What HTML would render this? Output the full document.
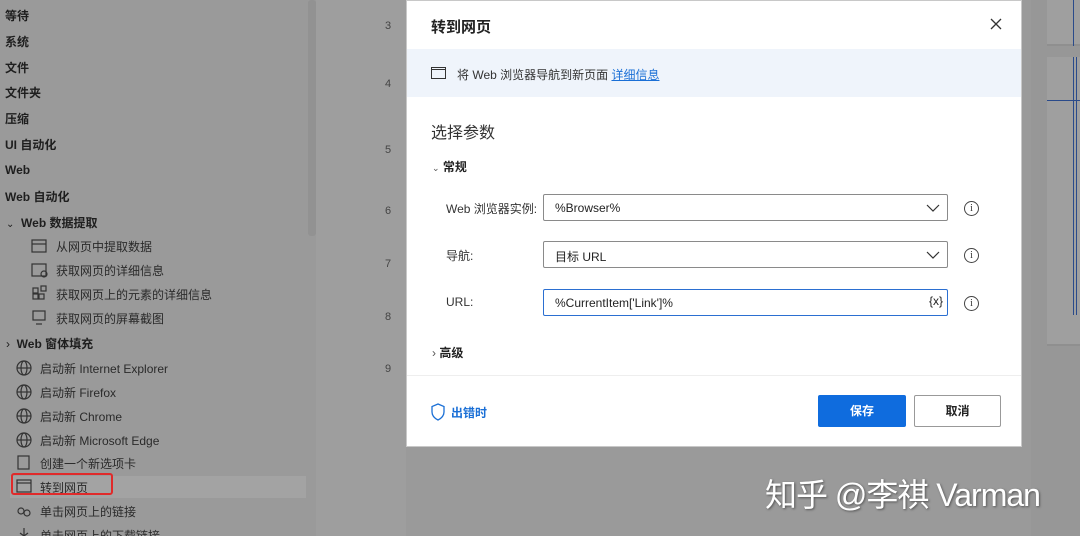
<!DOCTYPE html>
<html><head><meta charset="utf-8"><style>
*{margin:0;padding:0;box-sizing:border-box}
html,body{width:1080px;height:536px;overflow:hidden}
body{background:#9a9a9a;font-family:"Liberation Sans","Noto Sans CJK SC",sans-serif;position:relative;color:#1c1c1c}
.a{position:absolute;white-space:nowrap}
.h{font-size:12px;font-weight:bold;color:#1e1e1e}
.i{font-size:12px;color:#2a2a2a}
.n{font-size:11px;color:#444;left:385px}
.lab{font-size:12px;color:#333;left:446px}
.inp{position:absolute;left:543px;width:405px;height:27px;border:1px solid #8a8a8a;border-radius:2px;background:#fff;font-size:12px;padding:6px 11px;color:#222}
.info{position:absolute;left:964px;width:15px;height:15px;border:1px solid #444;border-radius:50%;font-size:10px;text-align:center;line-height:13px;color:#333;font-family:"Liberation Serif",serif}
</style></head><body>
<div class="a" style="left:308px;top:0;width:8px;height:236px;background:#929292;border-radius:3px"></div>
<div class="a" style="left:316px;top:0;width:90px;height:536px;background:#9e9e9e"></div>
<div class="a h" style="left:5px;top:7px">等待</div>
<div class="a h" style="left:5px;top:33px">系统</div>
<div class="a h" style="left:5px;top:59px">文件</div>
<div class="a h" style="left:5px;top:84px">文件夹</div>
<div class="a h" style="left:5px;top:110px">压缩</div>
<div class="a h" style="left:5px;top:136px">UI 自动化</div>
<div class="a h" style="left:5px;top:163px">Web</div>
<div class="a h" style="left:5px;top:188px">Web 自动化</div>
<div class="a h" style="left:6px;top:214px"><span style="font-weight:normal;font-size:10px">⌄</span>&nbsp; Web 数据提取</div>
<div class="a i" style="left:56px;top:238px">从网页中提取数据</div>
<div class="a i" style="left:56px;top:262px">获取网页的详细信息</div>
<div class="a i" style="left:56px;top:286px">获取网页上的元素的详细信息</div>
<div class="a i" style="left:56px;top:310px">获取网页的屏幕截图</div>
<div class="a h" style="left:6px;top:335px"><span style="font-weight:normal">›</span>&nbsp; Web 窗体填充</div>
<div class="a" style="left:10px;top:476px;width:296px;height:22px;background:#a3a3a3"></div>
<div class="a i" style="left:40px;top:360px">启动新 Internet Explorer</div>
<div class="a i" style="left:40px;top:384px">启动新 Firefox</div>
<div class="a i" style="left:40px;top:408px">启动新 Chrome</div>
<div class="a i" style="left:40px;top:432px">启动新 Microsoft Edge</div>
<div class="a i" style="left:40px;top:455px">创建一个新选项卡</div>
<div class="a i" style="left:40px;top:479px">转到网页</div>
<div class="a i" style="left:40px;top:503px">单击网页上的链接</div>
<div class="a i" style="left:40px;top:527px">单击网页上的下载链接</div>
<svg class="a" style="left:0;top:0" width="60" height="536" fill="none" stroke="#333" stroke-width="1.2">
<rect x="32" y="240" width="14" height="12"/><line x1="32" y1="244" x2="46" y2="244"/>
<rect x="32" y="264" width="14" height="12"/><circle cx="44" cy="274" r="3"/>
<rect x="33" y="288" width="5" height="5"/><rect x="33" y="294" width="5" height="5"/><rect x="39" y="294" width="5" height="5"/><rect x="41" y="286" width="5" height="5"/>
<rect x="33" y="311" width="12" height="9"/><line x1="36" y1="324" x2="42" y2="324"/>
<g><circle cx="24" cy="368" r="7"/><ellipse cx="24" cy="368" rx="3" ry="7"/><line x1="17" y1="368" x2="31" y2="368"/></g>
<g><circle cx="24" cy="392" r="7"/><ellipse cx="24" cy="392" rx="3" ry="7"/><line x1="17" y1="392" x2="31" y2="392"/></g>
<g><circle cx="24" cy="416" r="7"/><ellipse cx="24" cy="416" rx="3" ry="7"/><line x1="17" y1="416" x2="31" y2="416"/></g>
<g><circle cx="24" cy="440" r="7"/><ellipse cx="24" cy="440" rx="3" ry="7"/><line x1="17" y1="440" x2="31" y2="440"/></g>
<rect x="18" y="456" width="11" height="13"/>
<rect x="17" y="480" width="14" height="12"/><line x1="17" y1="483" x2="31" y2="483"/>
<circle cx="21" cy="511" r="3"/><circle cx="27" cy="513" r="3"/>
<path d="M24 528v8M20 533l4 3 4-3"/>
</svg>
<div class="a" style="left:11px;top:473px;width:102px;height:22px;border:2px solid #e02a2a;border-radius:3px"></div>
<div class="a n" style="top:20px">3</div>
<div class="a n" style="top:78px">4</div>
<div class="a n" style="top:144px">5</div>
<div class="a n" style="top:205px">6</div>
<div class="a n" style="top:258px">7</div>
<div class="a n" style="top:311px">8</div>
<div class="a n" style="top:363px">9</div>
<div class="a" style="left:1031px;top:0;width:49px;height:536px;background:#979797"></div>
<div class="a" style="left:1047px;top:0;width:33px;height:46px;background:#9f9f9f;border-bottom:2px solid #8f8f8f"></div>
<div class="a" style="left:1047px;top:57px;width:33px;height:289px;background:#9f9f9f;border-bottom:2px solid #8f8f8f"></div>
<div class="a" style="left:1073px;top:0;width:1px;height:46px;background:#2a4a8a"></div>
<div class="a" style="left:1073px;top:57px;width:1px;height:258px;background:#2a4a8a"></div>
<div class="a" style="left:1076px;top:57px;width:1px;height:258px;background:#2a4a8a"></div>
<div class="a" style="left:1047px;top:100px;width:33px;height:1px;background:#2a4a8a"></div>
<div class="a" style="left:406px;top:0;width:616px;height:447px;background:#fff;border:1px solid #c8c8c8"></div>
<div class="a" style="left:431px;top:16px;font-size:15px;font-weight:bold;color:#222">转到网页</div>
<svg class="a" style="left:990px;top:18px" width="12" height="12" stroke="#333" stroke-width="1.3"><path d="M1 1l10 10M11 1L1 11"/></svg>
<div class="a" style="left:407px;top:49px;width:614px;height:48px;background:#eff4fb"></div>
<div class="a" style="left:431px;top:67px;width:15px;height:12px;border:1.3px solid #333"><div style="height:2px;border-bottom:1.3px solid #333"></div></div>
<div class="a" style="left:457px;top:66px;font-size:12px;color:#333">将 Web 浏览器导航到新页面 <span style="color:#1a6fd6;text-decoration:underline">详细信息</span></div>
<div class="a" style="left:431px;top:119px;font-size:16px;color:#333">选择参数</div>
<div class="a" style="left:432px;top:158px;font-size:12px;color:#222"><span style="font-size:9px;color:#555">⌄</span> <b>常规</b></div>
<div class="a lab" style="top:200px">Web 浏览器实例:</div>
<div class="inp" style="top:194px">%Browser%</div>
<div class="a lab" style="top:247px">导航:</div>
<div class="inp" style="top:241px">目标 URL</div>
<div class="a lab" style="top:295px">URL:</div>
<div class="inp" style="top:289px;border-color:#2b6fd1;font-weight:500">%CurrentItem['Link']%<span style="position:absolute;right:4px;top:4px;font-size:12px">{x}</span></div>
<svg class="a" style="left:925px;top:200px" width="16" height="64" fill="none" stroke="#333" stroke-width="1.2"><path d="M2 5l6 6 6-6M2 52l6 6 6-6"/></svg>
<div class="info" style="top:201px">i</div>
<div class="info" style="top:248px">i</div>
<div class="info" style="top:296px">i</div>
<div class="a" style="left:432px;top:344px;font-size:12px;color:#222"><span style="color:#555">›</span> <b>高级</b></div>
<div class="a" style="left:407px;top:375px;width:614px;height:1px;background:#eee"></div>
<svg class="a" style="left:430px;top:403px" width="16" height="18" fill="none" stroke="#1a6fd6" stroke-width="1.3"><path d="M8 1L2 3.5V9c0 4 3 6.5 6 8 3-1.5 6-4 6-8V3.5z"/></svg>
<div class="a" style="left:451px;top:404px;font-size:12px;color:#1a6fd6;font-weight:bold">出错时</div>
<div class="a" style="left:818px;top:395px;width:88px;height:32px;background:#0f6cde;border-radius:2px;color:#fff;font-size:12px;font-weight:bold;text-align:center;line-height:32px">保存</div>
<div class="a" style="left:914px;top:395px;width:87px;height:32px;border:1px solid #999;border-radius:2px;background:#fff;color:#222;font-size:12px;font-weight:bold;text-align:center;line-height:30px">取消</div>
<div class="a" style="left:765px;top:470px;font-size:32px;color:#fff;text-shadow:1px 1px 2px #555;letter-spacing:-1px">知乎 @李祺 Varman</div>
</body></html>
